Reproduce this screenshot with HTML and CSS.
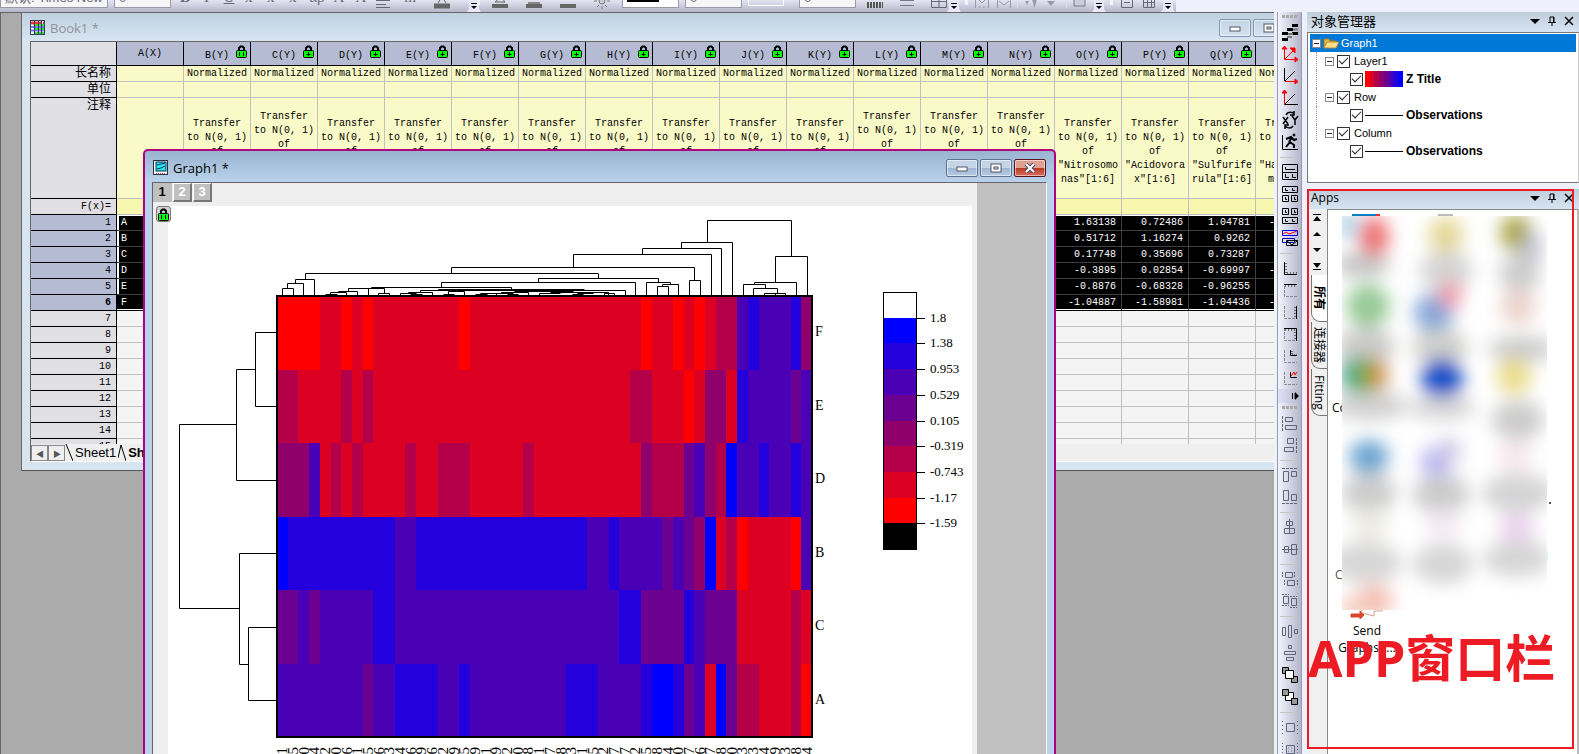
FILE: index.html
```html
<!DOCTYPE html>
<html lang="zh-CN">
<head>
    <meta charset="UTF-8">
    <meta name="viewport" content="width=device-width, initial-scale=1.0">
    <title>Graph1</title>
    <link rel="stylesheet" href="styles.css">
</head>
<body>
    <svg class="defs" width="0" height="0" aria-hidden="true">
        <symbol id="lock" viewBox="0 0 11 13">
            <path d="M3 6V3l1.500-1.500h2L8 3v3" fill="none" stroke="#000" stroke-width="2"/>
            <rect x=".5" y="5.5" width="10" height="7" rx="1" fill="#00ff00" stroke="#000"/>
            <path d="M5.5 7v4M3.5 9.5h4" stroke="#000"/>
        </symbol>
        <symbol id="lock-bars" viewBox="0 0 11 13">
            <path d="M3 6V3l1.500-1.500h2L8 3v3" fill="none" stroke="#000" stroke-width="2"/>
            <rect x=".5" y="5.5" width="10" height="7" rx="1" fill="#00ff00" stroke="#000"/>
            <path d="M3.5 7v4M7.5 7v4" stroke="#000"/>
        </symbol>
        <symbol id="pin" viewBox="0 0 10 10">
            <path d="M3 6V1h4v5M1 6.500h8M5 7v3M6.500 1v5" fill="none" stroke="#000"/>
        </symbol>
        <symbol id="cross" viewBox="0 0 10 10">
            <path d="M1 1l8 8M9 1L1 9" stroke="#000" stroke-width="1.500"/>
        </symbol>
        <symbol id="more" viewBox="0 0 14 14">
            <path d="M0 14l2-3V0h10v11l2 3z" fill="#e8e8fa"/>
            <path d="M4 5.500h6" stroke="#000"/>
            <path d="M4 8h6l-3 3z"/>
        </symbol>
    </svg>

    <!-- Панель форматирования -->
    <div class="toolbar">
        <select class="combo font-combo" aria-label="字体"><option>默认: Times New</option></select>
        <select class="combo size-combo" aria-label="字号"><option>0</option></select>
        <button class="tb"><b>B</b></button>
        <button class="tb"><i>I</i></button>
        <button class="tb"><u>U</u></button>
        <button class="tb">x²</button>
        <button class="tb">x<sub>2</sub></button>
        <button class="tb">x<sub>1</sub></button>
        <button class="tb">αβ</button>
        <button class="tb">A</button>
        <button class="tb">A</button>
        <button class="tb" aria-label="对齐"><svg width="14" height="10"><path d="M0 1.500h14M0 5.500h10M0 8.500h14" stroke="#667"/></svg></button>
        <button class="tb wide">m</button>
        <button class="tb wide" aria-label="字体颜色"><svg width="16" height="12"><path d="M0 9h16" stroke="#666" stroke-width="5"/><path d="M4 6l4-6 4 6" fill="none" stroke="#666"/></svg></button>
        <svg class="more first" width="14" height="14"><use href="#more"/></svg>
        <span class="vgrip"></span>
        <button class="tb fill" aria-label="填充"><svg width="16" height="12"><path d="M0 9h16" stroke="#666" stroke-width="4"/><path d="M3 5l6-5 4 5z" fill="none" stroke="#666"/></svg></button>
        <button class="tb fill" aria-label="线色"><svg width="16" height="12"><path d="M0 9h16" stroke="#666" stroke-width="4"/><path d="M2 6h12" stroke="#888" stroke-width="2"/></svg></button>
        <button class="tb fill" aria-label="边框色"><svg width="16" height="12"><path d="M0 9h16" stroke="#666" stroke-width="4"/></svg></button>
        <button class="tb fill" aria-label="亮度"><svg width="16" height="14"><circle cx="8" cy="6" r="3" fill="#ccc" stroke="#778"/><path d="M0 6h3M13 6h3M3 12l2-2M13 12l-2-2M8 11v3" stroke="#778"/></svg></button>
        <span class="combo line-combo"><span class="stroke"></span></span>
        <select class="combo size-combo" aria-label="线宽"><option>0</option></select>
        <span class="swatch-box"></span>
        <select class="combo size-combo" aria-label="图案"><option>0</option></select>
        <button class="tb wide" aria-label="填充图案"><svg width="16" height="12"><path d="M0 8h16" stroke="#555" stroke-width="6" stroke-dasharray="2 1"/></svg></button>
        <button class="tb wide" aria-label="线型"><svg width="14" height="12"><path d="M0 3.500h14M0 8.500h14" stroke="#778"/></svg></button>
        <button class="tb wide" aria-label="表格"><svg width="16" height="12"><path d="M.500 0v10.500h15V0M0 4.500h16M8 0v10" fill="none" stroke="#667"/></svg></button>
        <svg class="more tight" width="14" height="14"><use href="#more"/></svg>
        <span class="vgrip"></span>
        <button class="tb" aria-label="分布"><svg width="14" height="10"><path d="M.500 0v9M13.500 0v9M4 1l3 3 3-3M4 8h2M8 8h2" fill="none" stroke="#99a"/></svg></button>
        <button class="tb" aria-label="合并"><svg width="14" height="10"><path d="M.500 0v9M13.500 0v9M2 2l5 4 5-4" fill="none" stroke="#99a"/></svg></button>
        <span class="vsep"></span>
        <button class="tb" aria-label="下移"><svg width="14" height="10"><path d="M1 2h4l-2 4zM8 0h5l-2.500 9z" fill="#99a"/></svg></button>
        <button class="tb" aria-label="排序"><svg width="14" height="10"><path d="M1 2h8l-4 5z" fill="#99a"/></svg></button>
        <span class="vsep"></span>
        <button class="tb" aria-label="锁定"><svg width="14" height="10"><path d="M1 0v7h11V0" fill="#ccd" stroke="#778"/></svg></button>
        <svg class="more" width="14" height="14"><use href="#more"/></svg>
        <span class="vgrip"></span>
        <button class="tb" aria-label="图层"><svg width="12" height="10"><path d="M.500 0v8.500h11V0M3 3.500h6" fill="none" stroke="#667"/></svg></button>
        <button class="tb" aria-label="网格"><svg width="12" height="10"><path d="M.500 0v8.500h11V0M0 3.500h12M4.500 0v8M8.500 0v8" fill="none" stroke="#667"/></svg></button>
        <svg class="more" width="14" height="14"><use href="#more"/></svg>
    </div>

    <div class="main">
        <div class="workspace">
            <!-- Книга с данными -->
            <section class="window book">
                <header class="titlebar">
                    <svg width="16" height="16"><rect x=".500" y=".500" width="14" height="14" fill="#fff" stroke="#345"/><path d="M1 3h13" stroke="#f33" stroke-width="3" stroke-dasharray="3 1"/><path d="M1 7h13M1 10.500h13" stroke="#77e" stroke-width="2"/><path d="M5 5h9M5 9h9M5 13h9" stroke="#3d3" stroke-width="2"/><path d="M4.500 1v13M8.500 1v13M11.500 1v13" stroke="#336"/></svg>
                    <h2>Book1 *</h2>
                    <button class="win-btn" aria-label="最小化"><svg width="12" height="8"><rect x="1" y="3" width="10" height="4" fill="#fff" stroke="#556"/></svg></button>
                    <button class="win-btn" aria-label="最大化"><svg width="12" height="10"><rect x="1" y="1" width="10" height="8" fill="#fff" stroke="#556"/><rect x="4" y="4" width="4" height="2" fill="#cde" stroke="#556"/></svg></button>
                    <button class="win-btn" aria-label="关闭"></button>
                </header>
                <div class="sheet">
                    <div class="sheet-view">
                        <table class="cells">
                            <thead id="sheet-head"></thead>
                            <tbody id="sheet-body"></tbody>
                        </table>
                    </div>
                    <div class="sheet-tabs">
                        <button class="nav" aria-label="上一个">◀</button>
                        <button class="nav" aria-label="下一个">▶</button>
                        <svg width="8" height="17"><path d="M1 0l7 17" stroke="#000"/></svg>
                        <button class="sheet-tab">Sheet1</button>
                        <svg width="8" height="17"><path d="M0 14L3 1l5 16" fill="none" stroke="#000"/></svg>
                        <button class="sheet-tab active">Sheet2</button>
                    </div>
                </div>
            </section>

            <!-- Окно графика -->
            <section class="window graph">
                <header class="titlebar">
                    <svg width="16" height="16"><rect x=".500" y=".500" width="14" height="14" fill="#fff" stroke="#234"/><rect x="3" y="2" width="10" height="9" fill="#2ee" stroke="#134"/><path d="M4 5l4-1 4-1M4 9l4-1 4-2" fill="none" stroke="#226"/><path d="M3 13.500h10" stroke="#c44" stroke-dasharray="1 1"/></svg>
                    <h2>Graph1 *</h2>
                    <button class="win-btn" aria-label="最小化"><svg width="12" height="8"><rect x="1" y="3" width="10" height="4" fill="#fff" stroke="#556"/></svg></button>
                    <button class="win-btn" aria-label="最大化"><svg width="12" height="10"><rect x="1" y="1" width="10" height="8" fill="#fff" stroke="#556"/><rect x="4" y="4" width="4" height="2" fill="#cde" stroke="#556"/></svg></button>
                    <button class="win-btn close" aria-label="关闭"><svg width="12" height="10"><path d="M2 1l8 8M10 1L2 9" stroke="#434a66" stroke-width="4"/><path d="M2 1l8 8M10 1L2 9" stroke="#fff" stroke-width="2"/></svg></button>
                </header>
                <div class="graph-body">
                    <div class="graph-canvas">
                        <div class="layers">
                            <button class="layer active">1</button>
                            <button class="layer">2</button>
                            <button class="layer">3</button>
                        </div>
                        <div class="page-row">
                            <span class="page-lock"><svg width="11" height="13"><use href="#lock-bars"/></svg></span>
                            <div class="page">
                                <svg id="chart" viewBox="168 206 804 560" width="804" height="560" role="img" aria-label="热图"></svg>
                            </div>
                        </div>
                    </div>
                </div>
            </section>
        </div>

        <!-- Вертикальная панель инструментов -->
        <div class="vbar">
            <span class="hgrip"></span>
            <button aria-label="合并图层"><svg class="ico" viewBox="0 0 18 18"><path d="M11 2.500h6M6 6.500h6M1 10.500h6M11 10.500h6M1 16.500h6" stroke="#000" stroke-width="3"/><path d="M12 6.500h5M7 11h5M6 14h5" stroke="#777" stroke-width="2"/></svg></button>
            <button aria-label="缩放坐标"><svg class="ico red" viewBox="0 0 18 18"><path d="M3.500 3v11.500H17M4 14L14 4"/><path d="M1 4l2.500-3L6 4zM14 12l3 2.500-3 2.500zM9 3h5v5z" fill="#f00"/></svg></button>
            <button aria-label="缩放X轴"><svg class="ico" viewBox="0 0 18 18"><path d="M3.500 1v13M4 14L14 4"/><path d="M4 14.500h13" stroke="#f00"/><path d="M14 12l3 2.500-3 2.500z" fill="#f00" stroke="#f00"/></svg></button>
            <button aria-label="缩放Y轴"><svg class="ico" viewBox="0 0 18 18"><path d="M4 15.500h13M4 15L14 5"/><path d="M3.500 3v13" stroke="#f00"/><path d="M1 4l2.500-3L6 4z" fill="#f00" stroke="#f00"/></svg></button>
            <button aria-label="交换XY"><svg class="ico" viewBox="0 0 18 18"><path d="M2 6l5 7M7 6l-5 7M11 5l3 4 3-4M14 9v5M5 4c2-4 7-3 8-1M13 0v4H9M12 15c-2 3-6 2-8 0M4 18v-4h4" stroke-width="1.500"/></svg></button>
            <button aria-label="刷新"><svg class="ico" viewBox="0 0 18 18"><path d="M1.500 2v14.500H17"/><path d="M5 14l4-5M9 9l4 3v3M8 9l3-5M5 6l5-2 3 3 3-1" stroke-width="2"/><circle cx="13" cy="2" r="1" fill="#000"/></svg></button>
            <span class="hsep"></span>
            <button aria-label="双面板"><svg class="ico" viewBox="0 0 18 18"><path d="M1.500 1.500h15v15h-15zM1.500 9.500h15M4.500 4v2.500H14M4.500 11v3.500H8M11.500 11v3.500H15"/></svg></button>
            <button aria-label="四面板"><svg class="ico" viewBox="0 0 18 18"><path d="M1.500 1.500h15v6h-15zM1.500 10.500h6v6h-6zM10.500 10.500h6v6h-6zM4.500 3v2.500H7M11.500 3v2.500H14M4.500 12v2.500H6M13.500 12v2.500H15"/></svg></button>
            <button aria-label="九面板"><svg class="ico" viewBox="0 0 18 18"><path d="M1.500 1.500h6v6h-6zM10.500 1.500h6v6h-6zM1.500 10.500h15v6h-15zM4.500 3v2.500H6M13.500 3v2.500H15M4.500 12v2.500H7M11.500 12v2.500H14"/></svg></button>
            <button aria-label="堆叠"><svg class="ico" viewBox="0 0 18 18"><path d="M1.500 1.500h15v5h-15z" stroke="#00f"/><path d="M2 5l3-2 3 2 3-1 5-2" stroke="#f00"/><path d="M1.500 9.500h12v4h-12z" stroke="#00a"/><path d="M5.500 11.500h11v5h-11zM6 12l5 4 5-4"/></svg></button>
            <span class="hsep"></span>
            <button aria-label="左下轴"><svg class="ico" viewBox="0 0 18 18"><path d="M3.500 3v12.500H16"/><path d="M5 4v11M6 14h10" stroke-dasharray="1 2"/></svg></button>
            <button aria-label="上轴"><svg class="ico" viewBox="0 0 18 18"><path d="M3.500 5v10.500H16" stroke="#889" stroke-dasharray="3 1"/><path d="M3 3.500h13"/><path d="M4 5h12" stroke-dasharray="1 2"/></svg></button>
            <button aria-label="右轴"><svg class="ico" viewBox="0 0 18 18"><path d="M3.500 3v12.500H14" stroke="#889" stroke-dasharray="3 1"/><path d="M15.500 3v13"/><path d="M14 4v12" stroke-dasharray="1 2"/></svg></button>
            <button aria-label="上右轴"><svg class="ico" viewBox="0 0 18 18"><path d="M3.500 3v12.500H14" stroke="#889" stroke-dasharray="3 1"/><path d="M3 3.500h12.500V16"/><path d="M4 5h10v11" stroke-dasharray="1 2"/></svg></button>
            <button aria-label="嵌入"><svg class="ico" viewBox="0 0 18 18"><path d="M3.500 3v12.500H16" stroke="#889" stroke-dasharray="3 1"/><path d="M9.500 3v5.500H16"/><path d="M11 4v4h5" stroke-dasharray="1 1"/></svg></button>
            <button aria-label="嵌入数据"><svg class="ico" viewBox="0 0 18 18"><path d="M3.500 3v12.500H16" stroke="#889" stroke-dasharray="3 1"/><path d="M9.500 3v5.500H16"/><path d="M10 7l3-4 1 3 2-3" stroke="#f00"/></svg></button>
            <span class="v-more"><svg width="10" height="8"><path d="M1.500 1v6M4 1v6" stroke="#000"/><path d="M4 0v8l4-4z"/></svg></span>
            <span class="hgrip"></span>
            <button aria-label="左对齐"><svg class="ico gray" viewBox="0 0 18 18"><path d="M1.500 2v15" stroke-dasharray="3 1"/><path d="M4.500 3.500h7v4h-7zM4.500 11.500h11v4h-11z"/></svg></button>
            <button aria-label="右对齐"><svg class="ico gray" viewBox="0 0 18 18"><path d="M15.500 2v15" stroke-dasharray="3 1"/><path d="M6.500 2.500h6v5h-6zM3.500 11.500h9v4h-9z"/></svg></button>
            <span class="hsep"></span>
            <button aria-label="顶对齐"><svg class="ico gray" viewBox="0 0 18 18"><path d="M1 2.500h15" stroke-dasharray="3 1"/><path d="M2.500 5.500h5v10h-5zM10.500 5.500h5v5h-5z"/></svg></button>
            <button aria-label="底对齐"><svg class="ico gray" viewBox="0 0 18 18"><path d="M1 15.500h15" stroke-dasharray="3 1"/><path d="M2.500 2.500h5v10h-5zM10.500 6.500h5v6h-5z"/></svg></button>
            <span class="hsep"></span>
            <button aria-label="垂直居中"><svg class="ico gray" viewBox="0 0 18 18"><path d="M8.500 1v15M5.500 3.500h6v4h-6zM3.500 10.500h10v5h-10z"/></svg></button>
            <button aria-label="水平居中"><svg class="ico gray" viewBox="0 0 18 18"><path d="M1 9.500h16M3.500 6.500h4v6h-4zM10.500 4.500h5v10h-5z"/></svg></button>
            <span class="hsep"></span>
            <button aria-label="同宽"><svg class="ico gray" viewBox="0 0 18 18"><path d="M1.500 2v6M13.500 2v6M3.500 10v6M16.500 10v6" stroke-dasharray="2 1"/><path d="M4.500 2.500h7v5h-7zM6.500 10.500h7v5h-7z"/></svg></button>
            <button aria-label="同高"><svg class="ico gray" viewBox="0 0 18 18"><path d="M1 2.500h7M1 13.500h7M9 4.500h7M9 15.500h7" stroke-dasharray="2 1"/><path d="M2.500 4.500h5v7h-5zM10.500 6.500h5v7h-5z"/></svg></button>
            <span class="hsep"></span>
            <button aria-label="水平分布"><svg class="ico gray" viewBox="0 0 18 18"><path d="M1.500 5.500h3v8h-3zM7.500 3.500h3v12h-3zM13.500 7.500h3v4h-3z"/></svg></button>
            <button aria-label="垂直分布"><svg class="ico gray" viewBox="0 0 18 18"><path d="M7.500 1.500h3v3h-3zM3.500 7.500h11v3h-11zM5.500 13.500h7v3h-7z"/></svg></button>
            <button aria-label="置前"><svg class="ico" viewBox="0 0 18 18"><path d="M1.500 1.500h6v6h-6zM10.500 10.500h6v6h-6z" fill="#999"/><path d="M4.500 4.500h8v8h-8z" fill="#fff"/></svg></button>
            <button aria-label="置后"><svg class="ico" viewBox="0 0 18 18"><path d="M4.500 4.500h8v8h-8z" fill="#fff"/><path d="M1.500 1.500h6v6h-6zM10.500 10.500h6v6h-6z" fill="#999"/></svg></button>
            <span class="hsep"></span>
            <button aria-label="组合"><svg class="ico gray" viewBox="0 0 18 18"><path d="M5.500 5.500h8v8h-8z"/><path d="M1.500 3v14M16.500 3v14" stroke-dasharray="1 3"/></svg></button>
            <button aria-label="取消组合"><svg class="ico gray" viewBox="0 0 18 18"><path d="M5.500 5.500h8v8h-8z"/><path d="M1.500 3v14M16.500 3v14M7 8h5M7 11h5" stroke-dasharray="1 2"/></svg></button>
        </div>

        <aside class="side">
            <section class="panel">
                <header class="panel-title">
                    <h3>对象管理器</h3>
                    <button aria-label="菜单"><svg width="10" height="10"><path d="M0 3h10L5 8z"/></svg></button>
                    <button aria-label="固定"><svg width="10" height="10"><use href="#pin"/></svg></button>
                    <button aria-label="关闭"><svg width="10" height="10"><use href="#cross"/></svg></button>
                </header>
                <div class="tree">
                    <div class="node root">
                        <span class="exp"></span>
                        <svg width="16" height="14"><path d="M1 12V3h5l1 2h6v2" fill="#e8b94a" stroke="#a97a1c"/><path d="M1 12l3-6h12l-3 6z" fill="#ffe08a" stroke="#b98a2c"/></svg>
                        <span>Graph1</span>
                    </div>
                    <div class="node lvl1"><span class="exp"></span><input type="checkbox" id="n1" checked><label for="n1">Layer1</label></div>
                    <div class="node lvl2"><input type="checkbox" id="n2" checked><span class="ramp"></span><label for="n2">Z Title</label></div>
                    <div class="node lvl1"><span class="exp"></span><input type="checkbox" id="n3" checked><label for="n3">Row</label></div>
                    <div class="node lvl2"><input type="checkbox" id="n4" checked><span class="line"></span><label for="n4">Observations</label></div>
                    <div class="node lvl1"><span class="exp"></span><input type="checkbox" id="n5" checked><label for="n5">Column</label></div>
                    <div class="node lvl2 last"><input type="checkbox" id="n6" checked><span class="line"></span><label for="n6">Observations</label></div>
                </div>
            </section>

            <section class="panel apps">
                <header class="panel-title">
                    <h3>Apps</h3>
                    <button aria-label="菜单"><svg width="10" height="10"><path d="M0 3h10L5 8z"/></svg></button>
                    <button aria-label="固定"><svg width="10" height="10"><use href="#pin"/></svg></button>
                    <button aria-label="关闭"><svg width="10" height="10"><use href="#cross"/></svg></button>
                </header>
                <div class="apps-body">
                    <div class="apps-nav">
                        <button aria-label="顶部"><svg width="8" height="8"><path d="M0 .500h8" stroke="#000"/><path d="M0 7h8L4 2z"/></svg></button>
                        <button aria-label="向上"><svg width="8" height="8"><path d="M0 6h8L4 2z"/></svg></button>
                        <button aria-label="向下"><svg width="8" height="8"><path d="M0 2h8L4 6z"/></svg></button>
                        <button aria-label="底部"><svg width="8" height="8"><path d="M0 7.500h8" stroke="#000"/><path d="M0 1h8L4 6z"/></svg></button>
                        <button class="vtab active">所有</button>
                        <button class="vtab">连接器</button>
                        <button class="vtab">Fitting</button>
                    </div>
                    <div class="apps-list">
                        <svg class="gallery" viewBox="1328 209 249 400" width="249" height="400" aria-hidden="true">
                            <defs>
                                <filter id="soft" x="-50%" y="-50%" width="200%" height="200%"><feGaussianBlur stdDeviation="9"/></filter>
                                <clipPath id="area"><rect x="1342" y="215" width="205" height="394"/></clipPath>
                            </defs>
                            <path d="M1352 214h24" stroke="#0a7cc4" stroke-width="2"/>
                            <path d="M1376 214h4" stroke="#e33" stroke-width="2"/>
                            <path d="M1438 214h15" stroke="#bbb" stroke-width="2"/>
                            <path d="M1547 480v6" stroke="#8bd" stroke-dasharray="1 3"/>
                            <path d="M1549 502h2" stroke="#555" stroke-width="2"/>
                            <path d="M1547 552v8" stroke="#cff" stroke-width="2"/>
                            <text x="1332" y="411">Co</text>
                            <text x="1335" y="578" fill="#555">C</text>
                            <g clip-path="url(#area)">
                                <path class="cover" d="M1342 215h205v394h-205z"/>
                                <g id="blobs" filter="url(#soft)"></g>
                            </g>
                        </svg>
                        <div class="app">
                            <svg width="34" height="12"><path d="M1 4h9V1l4 4-4 4V7H1z" fill="#d8482a" stroke="#d8482a"/><path d="M12 0v3l12 3V1h8V0" fill="none" stroke="#d8a090"/></svg>
                            <span>Send</span>
                            <span>Graphs t...</span>
                        </div>
                    </div>
                </div>
                <div class="marker"></div>
                <div class="marker-text">APP窗口栏</div>
            </section>
        </aside>
    </div>

<script>
    const letters = 'ABCDEFGHIJKLMNOPQR'.split('');
    const names = { O: ['"Nitrosomo', 'nas"[1:6]'], P: ['"Acidovora', 'x"[1:6]'], Q: ['"Sulfurife', 'rula"[1:6]'], R: ['"Haliangiu', 'm"[1:6]'] };
    const values = {
        A: ['A', 'B', 'C', 'D', 'E', 'F'],
        O: ['1.63138', '0.51712', '0.17748', '-0.3895', '-0.8876', '-1.04887'],
        P: ['0.72486', '1.16274', '0.35696', '0.02854', '-0.68328', '-1.58981'],
        Q: ['1.04781', '0.9262', '0.73287', '-0.69997', '-0.96255', '-1.04436'],
        R: ['-1.02188', '', '', '-0.41207', '', '-1.10253']
    };
    const longNotes = ['C', 'L', 'M', 'N']; // комментарий в шесть строк

    // Заголовок таблицы
    let head = '<tr><th class="corner"></th>';
    letters.forEach(l => {
        if (l === 'A') {
            head += '<th class="col first">A(X)</th>';
        } else {
            const icon = l === 'B' ? 'lock-bars' : 'lock';
            head += `<th class="col"><span>${l}(Y)</span><svg width="11" height="13"><use href="#${icon}"/></svg></th>`;
        }
    });
    document.getElementById('sheet-head').innerHTML = head + '</tr>';

    // Строки меток и данных
    const row = (cls, title, cell) =>
        `<tr class="${cls}"><th>${title}</th>${letters.map(cell).join('')}</tr>`;
    let body = row('meta', '长名称', l => `<td>${l === 'A' ? '' : 'Normalized'}</td>`);
    body += row('meta', '单位', () => '<td></td>');
    body += row('note', '注释', l => {
        if (l === 'A') return '<td></td>';
        const lines = ['Transfer', 'to N(0, 1)', 'of'].concat(names[l] || ['&nbsp;', '&nbsp;']);
        if (longNotes.includes(l)) lines.push('&nbsp;');
        return `<td>${lines.join('<br>')}</td>`;
    });
    body += row('meta fx', 'F(x)=', () => '<td></td>');
    for (let i = 0; i < 15; i++) {
        body += row(i < 6 ? 'data picked' : 'data', i + 1, l => `<td>${(values[l] || [])[i] || ''}</td>`);
    }
    document.getElementById('sheet-body').innerHTML = body;

    // Тепловая карта: количество ячеек + код цвета
    const colors = { R: '#ff0000', r: '#dc0022', m: '#b40048', p: '#90006c', q: '#6c0090', v: '#4a00b4', b: '#2400dc', B: '#0000ff', w: '#ffffff', k: '#000000' };
    const heat = [
        ['F', '4R2r1R1r1R8r1R16r1R2r1R1r1R1r2m1v1b3v1b1p'],
        ['E', '2m4r1m1r1m24r2m3r1R1r2p1r1b4v1q1v'],
        ['D', '3p1v1r1m1r1m4r1m2r3m5r1m10r1p3m1q1v1p1m1B2v1b2v1b1v'],
        ['B', '1B10b2v16b2v1b4v1q1v1q1p1B1r1m1R4r1R1v'],
        ['C', '2q1v1q5v2b21v2b4q1b1v3q5r1m1r'],
        ['A', '8v1q2v4b2v1b9v3b4v1b2B1b1q1v1r1B1q2m3r1m1R']
    ];
    const left = 277, top0 = 296, cw = 10.7, ch = 73.6;
    let svg = '';
    heat.forEach(([name, runs], r) => {
        const y = Math.round(top0 + r * ch), h = Math.round(top0 + (r + 1) * ch) - y;
        let c = 0;
        runs.match(/\d+\w/g).forEach(run => {
            const n = parseInt(run);
            const x = Math.round(left + c * cw), w = Math.round(left + (c + n) * cw) - x;
            svg += `<rect x="${x}" y="${y}" width="${w}" height="${h}" fill="${colors[run.slice(-1)]}"/>`;
            c += n;
        });
        svg += `<text class="row-label" x="815" y="${y + 40}">${name}</text>`;
    });
    svg += '<rect x="277" y="296" width="535" height="441" class="frame"/>';

    // Подписи столбцов
    '15042061563469629591920817831527725840767803349384'.split('').forEach((d, i) => {
        svg += `<text class="col-label" transform="translate(${Math.round(left + (i + 0.5) * cw) + 5} 747) rotate(-90)">${d}</text>`;
    });

    // Дендрограммы
    const trees = [
        'M276 332H255V406H276M255 369H236V480H276M236 424H179V608H239',
        'M276 553H239V664H248M276 627H248V700H276',
        'M282 295V288H293V295M287 288V283H303V295M295 283V279H314V295M305 279V273H598V278',
        'M451 273V267H694V280M573 267V254H711V295M642 254V248H721V295M681 248V242H732V295',
        'M707 242V220H791V256M775 282V256H807V295M754 284V282H796V295M743 295V284H765V288',
        'M753 295V288H777V293M764 295V293H785V295M775 293V295M689 295V280H700V295',
        'M538 282V278H658V282M646 295V282H670V284M662 286V284H678V295M657 295V286H668V295',
        'M441 287V282H635V295M371 288V287H511V289M438 290V289H584M348 291V288H384V293M368 288V295',
        'M378 295V293H389V295M338 292V291H357V295M330 295V292H346V295M325 294H337',
        'M420 292V290H456M408 293V292H432V295M400 295V293H416M410 294H422M448 295V291H464V295M443 294H454',
        'M456 290H625V295M514 292V291H560M501 293V292H528V295M480 295V293H513M475 294H487M507 294H518M496 295V293M539 295V293H560',
        'M543 290H573M543 291H573M550 292H608V295M577 293H593M604 295V293H614V295M572 294H583'
    ];
    svg += `<g transform="translate(.5 .5)"><path class="tree-line" d="${trees.join('')}"/></g>`;

    // Цветовая шкала
    const limits = ['1.8', '1.38', '0.953', '0.529', '0.105', '-0.319', '-0.743', '-1.17', '-1.59'];
    'wBbvqpmrRk'.split('').forEach((c, i) => {
        const y = Math.round(292 + i * 25.7);
        svg += `<rect x="884" y="${y}" width="33" height="26" fill="${colors[c]}"/>`;
        if (i > 0) {
            svg += `<path class="tree-line" d="M917 ${y + 0.5}h8"/><text class="limit" x="930" y="${y + 4}">${limits[i - 1]}</text>`;
        }
    });
    svg += '<rect x="883.5" y="292.5" width="33" height="257" fill="none" stroke="#000"/>';
    document.getElementById('chart').innerHTML = svg;

    // Размытые значки приложений: x, y, rx, ry, цвет
    const blobs = [
        [1348, 224, 12, 14, '#b4d6ea'], [1374, 236, 15, 21, '#ee7070'], [1362, 264, 28, 12, '#c2c2c2'],
        [1446, 234, 18, 18, '#e4d898'], [1446, 270, 26, 20, '#d4d4d4'], [1516, 232, 16, 18, '#aaa648'], [1532, 246, 10, 16, '#bcc0d0'], [1520, 272, 20, 20, '#cccccc'],
        [1368, 305, 22, 22, '#98ca98'], [1366, 345, 29, 18, '#cccaca'], [1434, 312, 20, 20, '#86a8d8'], [1450, 294, 12, 13, '#f298a8'], [1440, 346, 28, 18, '#d0d0ca'],
        [1518, 306, 18, 18, '#ecd4cc'], [1522, 348, 34, 13, '#cccccc'],
        [1354, 374, 15, 18, '#60b09a'], [1366, 374, 12, 18, '#60a838'], [1378, 374, 10, 17, '#d09650'], [1370, 405, 38, 14, '#d0d0d0'],
        [1442, 378, 21, 21, '#0450c8'], [1442, 407, 34, 12, '#d6d6d6'], [1514, 375, 18, 18, '#ecdc8c'], [1518, 419, 26, 20, '#cccccc'],
        [1369, 456, 20, 17, '#6aa4d0'], [1369, 492, 27, 20, '#cccccc'], [1436, 461, 16, 15, '#b8b4f4'], [1448, 450, 13, 13, '#cfc8e4'], [1441, 493, 28, 20, '#cccccc'],
        [1515, 455, 18, 18, '#f6e8ee'], [1518, 492, 36, 19, '#d4d4d4'],
        [1370, 524, 18, 18, '#ecebe4'], [1366, 562, 36, 20, '#d6d6d6'], [1443, 524, 18, 16, '#f3eaf3'], [1443, 563, 30, 20, '#d6d6d6'],
        [1517, 528, 18, 18, '#ead4ee'], [1517, 558, 34, 18, '#d6d6d6'], [1374, 600, 19, 16, '#f5c0b4'], [1352, 608, 14, 10, '#f4cabc']
    ];
    document.getElementById('blobs').innerHTML = blobs.map(b =>
        `<ellipse cx="${b[0]}" cy="${b[1]}" rx="${b[2]}" ry="${b[3]}" fill="${b[4]}"/>`).join('');
</script>
</body>
</html>
```

FILE: styles.css
```css
* {
    box-sizing: border-box;
}

body {
    margin: 0;
    height: 100vh;
    display: flex;
    flex-direction: column;
    overflow: hidden;
    background-color: #eef0fc;
    font-family: "Open Sans", "Noto Sans CJK SC", sans-serif;
    font-size: 12px;
    color: #000;
}

h2,
h3 {
    margin: 0;
    font-weight: normal;
}

button {
    padding: 0;
    border: 0;
    background: none;
    font: inherit;
    color: inherit;
}

.defs {
    position: absolute;
}

/* Верхняя панель */
.toolbar {
    height: 12px;
    flex: none;
    align-self: flex-start;
    display: flex;
    align-items: flex-end;
    overflow: hidden;
    background: linear-gradient(#e4e4f0, #b6b6cc);
    color: #667;
}

.tb {
    width: 22px;
    height: 20px;
    flex: none;
    margin-bottom: 5px;
    display: flex;
    align-items: flex-end;
    justify-content: center;
    font: 15px/20px "Liberation Serif", serif;
}

.tb sub {
    font-size: 9px;
}

.tb.wide {
    width: 32px;
}

.tb.fill {
    width: 34px;
}

.tb svg {
    margin-bottom: -2px;
}

.combo {
    flex: none;
    height: 22px;
    margin: 0 3px 4px;
    padding: 0 4px;
    appearance: none;
    border: 1px solid #99a;
    border-radius: 0;
    background-color: #f6f6f8;
    font-size: 13px;
    color: #667;
}

.font-combo {
    width: 108px;
    margin-left: 0;
}

.size-combo {
    width: 57px;
}

.line-combo {
    width: 57px;
    display: flex;
    align-items: flex-end;
    padding-bottom: 5px;
    background-color: #fff;
}

.stroke {
    width: 32px;
    height: 2px;
    background-color: #000;
}

.swatch-box {
    flex: none;
    width: 36px;
    height: 20px;
    margin: 0 12px 6px 3px;
    border: 1px solid #fff;
}

.more {
    flex: none;
    margin: 0 1px;
}

.more.first {
    margin: 0 -7px 0 9px;
}

.more.tight {
    margin-left: -8px;
}

.vgrip {
    flex: none;
    width: 3px;
    height: 8px;
    margin: 0 3px 7px;
    background-color: #f4f4fc;
}

.vsep {
    flex: none;
    width: 1px;
    height: 8px;
    margin: 0 2px 4px;
    background-color: #dde;
}

.main {
    flex: 1;
    min-height: 0;
    display: flex;
}

/* Рабочая область */
.workspace {
    flex: 1;
    min-width: 0;
    position: relative;
    overflow: hidden;
    background-color: #ababab;
    border-top: 1px solid #666;
    border-left: 1px solid #666;
}

.window {
    position: absolute;
    display: flex;
    flex-direction: column;
}

.titlebar {
    flex: none;
    height: 28px;
    display: flex;
    align-items: center;
    gap: 2px;
    padding: 0 8px;
}

.titlebar h2 {
    flex: 1;
    margin-left: 2px;
    font-size: 13px;
}

.win-btn {
    width: 32px;
    height: 18px;
    display: flex;
    align-items: center;
    justify-content: center;
    border: 1px solid #7f95b0;
    border-radius: 2px;
    box-shadow: inset 0 0 0 1px rgba(255, 255, 255, 0.5);
}

.book {
    left: 20px;
    top: 0;
    right: -55px;
    height: 458px;
    padding: 0 8px 8px;
    background: linear-gradient(#c0d0e0, #d7e5f1 28px);
    border-left: 1px solid #666;
    border-bottom: 1px solid #555;
}

.book .titlebar {
    padding: 2px 2px 0 0;
    color: #909499;
}

.sheet {
    flex: 1;
    min-height: 0;
    display: flex;
    flex-direction: column;
    overflow: hidden;
    border-top: 1px solid #666;
    border-left: 1px solid #666;
    border-bottom: 1px solid #fff;
    background-color: #efefef;
}

.sheet-view {
    flex: 1;
    min-height: 0;
    overflow: hidden;
}

.cells {
    width: 1292px;
    table-layout: fixed;
    border-collapse: separate;
    border-spacing: 0;
    font: 10px/14px "Liberation Mono", "Noto Sans CJK SC", monospace;
}

.cells th,
.cells td {
    width: 67px;
    height: 16px;
    padding: 1px 3px 0;
    overflow: hidden;
    white-space: nowrap;
    border-right: 1px solid #c0c0c0;
    border-bottom: 1px solid #c0c0c0;
}

.cells th {
    font-weight: normal;
    border-color: #000;
    background-color: #e0dfe4;
}

.cells .corner {
    width: 86px;
    height: 24px;
}

.cells .col {
    background-color: #b5bbd3;
    text-align: right;
    vertical-align: middle;
}

.cells .col.first {
    text-align: center;
}

.cells .col svg {
    margin-left: 7px;
    vertical-align: 0;
}

.cells tbody th {
    padding-right: 5px;
    text-align: right;
    vertical-align: top;
}

.meta th,
.note th {
    font-size: 12px;
}

.meta td,
.note td {
    background-color: #fafac8;
    text-align: center;
}

.cells .note td {
    height: 101px;
    padding-top: 7px;
    vertical-align: middle;
}

.cells .fx th {
    font-size: 10px;
}

.fx td {
    background-color: #f8f7b0;
}

.data td {
    background-color: #f4f4f4;
    text-align: right;
    vertical-align: top;
}

.picked th {
    background-color: #b5bbd3;
}

.cells .picked td {
    padding-right: 5px;
    background-color: #000;
    border-color: #404040;
    color: #fff;
}

.cells .picked td:nth-child(2) {
    padding-left: 4px;
    text-align: left;
    box-shadow: inset 2px 0 #fff;
}

.cells .fx + .picked td {
    padding-top: 0;
    border-top: 1px solid #fff;
}

.picked:nth-child(10) th {
    font-weight: bold;
}

.cells .picked:nth-child(10) td {
    border-bottom-color: #000;
    box-shadow: inset 0 -1px #fff;
}

.sheet-tabs {
    flex: none;
    height: 17px;
    display: flex;
    align-items: center;
    font: 13px/17px "Liberation Sans", sans-serif;
}

.nav {
    width: 17px;
    height: 16px;
    border: 1px solid #888;
    font-size: 8px;
    color: #555;
}

.sheet-tab {
    padding: 0 2px;
}

.sheet-tab.active {
    font-weight: bold;
}

.graph {
    left: 142px;
    top: 136px;
    width: 913px;
    bottom: -30px;
    border: 2px solid #b00080;
    border-radius: 5px 5px 0 0;
    background: linear-gradient(#99b4d1, #b9d1ea 30px);
}

.graph .titlebar {
    height: 31px;
    padding-top: 3px;
}

.graph .win-btn {
    border-color: #5d7390;
    background: linear-gradient(#c4d5e8 50%, #9db5d0 50%, #b5cce4);
}

.graph .win-btn.close {
    border-color: #5a1420;
    background: linear-gradient(#e0a090 50%, #b83820 50%, #d87060);
}

.graph-body {
    flex: 1;
    min-height: 0;
    margin: 0 7px;
    padding-right: 69px;
    border: 1px solid #666;
    border-right-color: #fff;
    background-color: #c0c0c0;
}

.graph-canvas {
    height: 100%;
    display: flex;
    flex-direction: column;
    overflow: hidden;
    background-color: #efefef;
}

.layers {
    flex: none;
    height: 23px;
    display: flex;
    gap: 1px;
}

.layer {
    width: 19px;
    height: 19px;
    border: 1px solid #fff;
    border-right: 2px solid #777;
    border-bottom: 2px solid #777;
    background-color: #c0c0c0;
    font: bold 13px/16px "Liberation Sans", sans-serif;
    color: #fff;
}

.layer.active {
    border-color: #c0c0c0;
    color: #000;
}

.page-row {
    flex: 1;
    min-height: 0;
    display: flex;
    align-items: flex-start;
}

.page-lock {
    width: 15px;
    height: 16px;
    margin-left: 3px;
    margin-right: -3px;
    display: flex;
    align-items: center;
    justify-content: center;
    z-index: 1;
    border: 1px solid #777;
    border-radius: 3px;
    background-color: #d0d0d0;
}

.page {
    background-color: #fff;
}

.page svg {
    display: block;
}

.frame {
    fill: none;
    stroke: #000;
    stroke-width: 2;
}

.tree-line {
    fill: none;
    stroke: #000;
}

.row-label {
    font: 14px "Liberation Serif", serif;
}

.col-label {
    font: 15px "Liberation Serif", serif;
    text-anchor: end;
}

.limit {
    font: 13px "Liberation Serif", serif;
}

/* Инструменты справа */
.vbar {
    flex: none;
    width: 25px;
    margin: 0 5px 0 3px;
    display: flex;
    flex-direction: column;
    align-items: center;
    overflow: hidden;
    border-left: 1px solid #99a;
    border-right: 1px solid #99a;
    background: linear-gradient(to right, #f2f4fd, #b4b5ca);
}

.vbar button {
    flex: none;
    width: 22px;
    height: 22px;
    display: flex;
    align-items: center;
    justify-content: center;
}

.ico {
    width: 18px;
    height: 18px;
    fill: none;
    stroke: #000;
}

.ico.red {
    stroke: #f00;
}

.ico.gray {
    stroke: #5f667c;
}

.hgrip {
    flex: none;
    width: 15px;
    height: 3px;
    margin: 3px 0;
    background: repeating-linear-gradient(to right, #aaa 0, #aaa 3px, transparent 3px, transparent 4px);
}

.hsep {
    flex: none;
    width: 19px;
    height: 1px;
    margin: 4px 0 3px;
    background-color: #c4c4c4;
}

.v-more {
    flex: none;
    width: 100%;
    height: 14px;
    display: flex;
    align-items: center;
    justify-content: flex-end;
    background: linear-gradient(to right, #e0e2f4, #b4b5ca);
}

/* Боковые панели */
.side {
    flex: none;
    width: 272px;
    display: flex;
    flex-direction: column;
    gap: 6px;
}

.panel-title {
    flex: none;
    height: 20px;
    display: flex;
    align-items: center;
    gap: 7px;
    padding: 0 5px 2px 4px;
    background: linear-gradient(#bfcddb, #d7e4f2);
}

.panel-title h3 {
    flex: 1;
    font-size: 13px;
    line-height: 18px;
}

.panel-title button {
    display: flex;
}

.tree {
    height: 151px;
    padding: 1px 2px 0;
    background-color: #fff;
    border: 1px solid #777;
    border-right-color: #ccc;
    font: 11px/18px "Liberation Sans", sans-serif;
}

.node {
    height: 18px;
    display: flex;
    align-items: center;
    gap: 3px;
}

.root {
    padding-left: 2px;
    gap: 2px;
    background-color: #0078d7;
    color: #fff;
}

.lvl1 {
    margin-left: 6px;
    padding-left: 8px;
    border-left: 1px dotted #999;
}

.lvl2 {
    margin-left: 6px;
    padding-left: 33px;
    gap: 2px;
    border-left: 1px dotted #999;
    font-size: 12px;
    font-weight: bold;
}

.lvl2.last {
    border-left-color: transparent;
}

.exp {
    width: 9px;
    height: 9px;
    border: 1px solid #888;
    background: linear-gradient(#224, #224) center / 5px 1px no-repeat #fff;
}

.node input {
    flex: none;
    width: 13px;
    height: 13px;
    margin: 0;
    display: flex;
    align-items: center;
    justify-content: center;
    appearance: none;
    border: 1px solid #333;
}

.node input:checked::before {
    content: "";
    width: 8px;
    height: 4px;
    margin-bottom: 3px;
    border-left: 1px solid #222;
    border-bottom: 1px solid #222;
    transform: rotate(-45deg);
}

.ramp {
    width: 38px;
    height: 16px;
    background: linear-gradient(to right, #f00 12%, #dc0022 12% 25%, #b40048 25% 37%, #90006c 37% 50%, #6c0090 50% 62%, #4a00b4 62% 75%, #2400dc 75% 87%, #00f 87%);
}

.line {
    width: 38px;
    height: 1px;
    background-color: #000;
}

.node label {
    padding-left: 1px;
}

.apps {
    flex: 1;
    min-height: 0;
    position: relative;
    display: flex;
    flex-direction: column;
}

.apps .panel-title h3 {
    font-size: 12px;
}

.apps-body {
    flex: 1;
    min-height: 0;
    display: flex;
}

.apps-nav {
    flex: none;
    width: 20px;
    display: flex;
    flex-direction: column;
    align-items: center;
    background-color: #f0f0f0;
}

.apps-nav button {
    flex: none;
    height: 16px;
}

.apps-nav .vtab {
    width: 16px;
    height: 47px;
    align-self: flex-end;
    writing-mode: vertical-rl;
    text-orientation: sideways;
    text-align: center;
    font-size: 12px;
    line-height: 16px;
    border-left: 1px solid #777;
    border-bottom: 1px solid #777;
    border-radius: 0 0 0 9px;
    background-color: #f0f0f0;
}

.apps-nav .vtab.active {
    margin-top: 2px;
    background-color: #fff;
    font-weight: bold;
}

.apps-list {
    flex: 1;
    overflow: hidden;
    background-color: #fff;
    border-left: 1px solid #888;
    border-top: 1px solid #888;
    border-right: 2px solid #bbb;
}

.gallery {
    display: block;
}

.cover {
    fill: #fff;
}

.app {
    width: 78px;
    display: flex;
    flex-direction: column;
    align-items: center;
    line-height: 17px;
}

.marker {
    position: absolute;
    inset: 0 5px 5px 0;
    border: 2px solid #ed1c24;
}

.marker-text {
    position: absolute;
    left: 1px;
    bottom: 64px;
    font: bold 50px/64px "Open Sans", "Noto Sans CJK SC", sans-serif;
    color: #ed1c24;
}
```
